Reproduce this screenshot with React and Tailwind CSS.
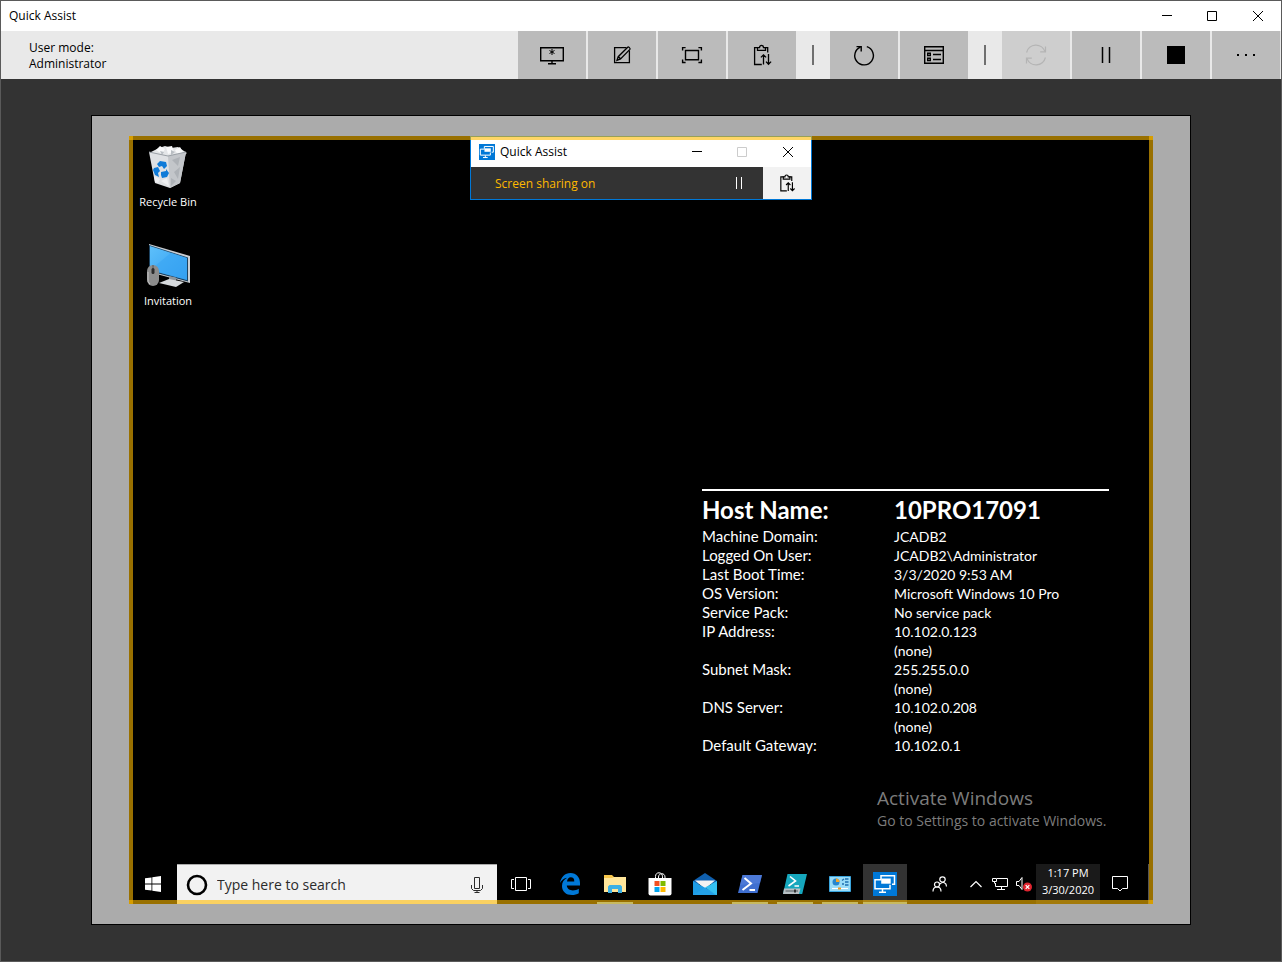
import React from 'react';

const hostInfo = [
  ['Machine Domain:', ['JCADB2']],
  ['Logged On User:', ['JCADB2\\Administrator']],
  ['Last Boot Time:', ['3/3/2020 9:53 AM']],
  ['OS Version:', ['Microsoft Windows 10 Pro']],
  ['Service Pack:', ['No service pack']],
  ['IP Address:', ['10.102.0.123', '(none)']],
  ['Subnet Mask:', ['255.255.0.0', '(none)']],
  ['DNS Server:', ['10.102.0.208', '(none)']],
  ['Default Gateway:', ['10.102.0.1']],
];

// Shared svg wrapper for line icons
function Line({ w = 24, h = 24, sw = 1, color = 'currentColor', children }) {
  return (
    <svg width={w} height={h} viewBox={`0 0 ${w} ${h}`} fill="none" stroke={color} strokeWidth={sw} aria-hidden="true">
      {children}
    </svg>
  );
}

const MonitorIcon = () => (
  <Line sw={1.4}>
    <path d="M.7 4.7h22.6v13H.7zM12 18v3M8 20.7h8" />
    <path strokeWidth="1" d="M12 6v6M9.5 7.5l5 3M14.500 7.500l-5 3" />
  </Line>
);

const EditIcon = () => (
  <Line sw={1.3}>
    <path d="M16.500 4.600H4.600v15h14.800V7.500" />
    <path d="M7 17.300l1.200-3.600L17.700 4.200c.8-.8 3 1.200 2.200 2.200l-9.400 9.500zM8.500 13.800l2 2" />
  </Line>
);

const FitIcon = () => (
  <Line sw={1.4}>
    <path d="M5.500 7.500h13v9.300h-13z" />
    <path d="M2.600 7.500V4.600h3M18.400 4.600h3v2.900M21.400 16.500v3h-3M5.600 19.500h-3v-3" />
  </Line>
);

const ClipboardIcon = () => (
  <Line sw={1.3}>
    <path d="M8 4.600H4.600v16.900h7.200M14.500 4.600h3.200v5" />
    <path d="M7.500 7.400V4.600h2c0-3 4-3 4 0h2v2.800z" />
    <path d="M13.500 21.500V12M10.900 14.400l2.600-2.600 2.600 2.600M18.500 11v10M16 18.600l2.500 2.600 2.600-2.600" />
  </Line>
);

const RestartIcon = () => (
  <Line sw={1.4}>
    <path d="M14.800 3.700a9.300 9.300 0 1 1-6.300.3" />
    <path d="M4.500 3.600h4.700v4.800" />
  </Line>
);

const TaskManagerIcon = () => (
  <Line sw={1.4}>
    <path d="M2.700 3.700h18.600v16.600H2.700zM2.700 7.500h18.600" />
    <path d="M5.700 10.200h2.600v2.300H5.700zM5.700 15.200h2.600v2.300H5.700zM11 11.500h8M11 16.500h8" />
  </Line>
);

const ReconnectIcon = () => (
  <Line sw={1.2} color="#b4b4b4">
    <path d="M2.600 9.500A9.600 9.600 0 0 1 21 8.500M21.400 14.500A9.600 9.600 0 0 1 3 15.500" />
    <path d="M21.500 3.500v5.300h-5.300M2.500 20.500v-5.300h5.300" />
  </Line>
);

const PauseIcon = () => (
  <Line sw={1.5}>
    <path d="M8.500 4v16M15.500 4v16" />
  </Line>
);

const StopIcon = () => (
  <Line>
    <path d="M3 3h18v18H3z" fill="#000" stroke="none" />
  </Line>
);

const MoreIcon = () => (
  <Line>
    <path d="M3 11h2v2H3zM11 11h2v2h-2zM19 11h2v2h-2z" fill="#000" stroke="none" />
  </Line>
);

// Two overlapping screens used as the app logo
function AssistLogo({ size }) {
  return (
    <svg width={size} height={size} viewBox="0 0 24 24" fill="none" aria-hidden="true">
      <path fill="#0078d7" d="M0 0h24v24H0z" />
      <path d="M8 7V3.700h13.500v8.600H19" stroke="#fff" strokeWidth="1.500" />
      <path d="M8.500 7.700H2v9h15v-4" stroke="#fff" strokeWidth="1.500" />
      <path d="M8.200 6.500h9.500v5.200H8.200z" fill="#fff" />
      <path d="M9.500 17v3.300M6 20.300h7" stroke="#fff" strokeWidth="1.500" />
    </svg>
  );
}

function WindowControls({ maxDisabled }) {
  return (
    <div className="flex self-stretch">
      <button aria-label="Minimize" className="flex w-[46px] items-center justify-center">
        <Line w={12} h={10}><path d="M2 4.500h10" /></Line>
      </button>
      <button aria-label="Maximize" disabled={maxDisabled} className="flex w-[46px] items-center justify-center disabled:text-[#cccccc]">
        <Line w={10} h={10}><path d="M.5.5h9v9h-9z" /></Line>
      </button>
      <button aria-label="Close" className="flex w-[46px] items-center justify-center">
        <Line w={10} h={10}><path d="M0 0l10 10M10 0L0 10" /></Line>
      </button>
    </div>
  );
}

function ToolButton({ label, disabled, children }) {
  return (
    <button
      aria-label={label}
      disabled={disabled}
      className="flex w-[68px] items-center justify-center bg-[#bbbbbb] text-black disabled:bg-[#cecece]"
    >
      {children}
    </button>
  );
}

function Separator() {
  return (
    <div className="flex w-[34px] items-center justify-center">
      <div className="h-5 w-[2px] bg-[#6f6f6f]" />
    </div>
  );
}

function Toolbar() {
  return (
    <div className="flex h-12 shrink-0 justify-between bg-[#e9e9e9] pr-px">
      <div className="flex flex-col justify-center pt-[2px] pl-7 text-[12px] leading-4">
        <span>User mode:</span>
        <span>Administrator</span>
      </div>
      <div className="flex">
        <div className="flex gap-[2px]">
          <ToolButton label="Select monitor"><MonitorIcon /></ToolButton>
          <ToolButton label="Annotate"><EditIcon /></ToolButton>
          <ToolButton label="Actual size"><FitIcon /></ToolButton>
          <ToolButton label="Toggle instruction channel"><ClipboardIcon /></ToolButton>
        </div>
        <Separator />
        <div className="flex gap-[2px]">
          <ToolButton label="Restart"><RestartIcon /></ToolButton>
          <ToolButton label="Task Manager"><TaskManagerIcon /></ToolButton>
        </div>
        <Separator />
        <div className="flex gap-[2px]">
          <ToolButton label="Reconnect" disabled><ReconnectIcon /></ToolButton>
          <ToolButton label="Pause"><PauseIcon /></ToolButton>
          <ToolButton label="End"><StopIcon /></ToolButton>
          <ToolButton label="Details"><MoreIcon /></ToolButton>
        </div>
      </div>
    </div>
  );
}

function RecycleBin() {
  return (
    <svg width="48" height="48" viewBox="0 0 48 48" aria-hidden="true">
      <path d="M7 10l8-4 6-2 6 2 7-1 9 6-5 4-26 1z" fill="#e4e6e8" />
      <path d="M12 8l4-4 5 3-3 5zM22 5l6-1 2 6-6 2zM31 8l5-3 3 5-5 3z" fill="#f8f9fa" />
      <path d="M16 9l4 1-2 3zM27 8l4 2-4 3z" fill="#b9bec3" />
      <path d="M5 10l19 4 18-4-6 31-10 5-15-5z" fill="#dfe1e4" />
      <path d="M24 14l18-4-6 31-10 5z" fill="#c3c6ca" />
      <path d="M5 10l19 4 18-4" fill="none" stroke="#9aa0a6" />
      <path d="M28 18l8-3-2 9zM30 30l6-5-2 12zM27 36l5 3-5 5z" fill="#aeb2b7" />
      <path d="M10 34l6 3-2 4-3-1zM17 39l6-3 2 8z" fill="#eff0f2" />
      <path d="M13 22l3-3 6 1 1 4-3 3-2-3-3 1zM10 26l4-1 2 4-2 2 1 4-4-2-2-5zM17 30l5-1v-2l3 4-2 4-5 1-1-3z" fill="#0f7bd8" />
    </svg>
  );
}

function InvitationIcon() {
  return (
    <svg width="48" height="48" viewBox="0 0 48 48" aria-hidden="true">
      <defs>
        <linearGradient id="screen" x1="0" y1="0" x2="1" y2="1">
          <stop offset="0" stopColor="#5ec0fb" />
          <stop offset="1" stopColor="#2f9bee" />
        </linearGradient>
      </defs>
      <path d="M5 3l41 12v27L5 31z" fill="#c9ced3" />
      <path d="M5 4l39 12.500v24L5 30z" fill="#1c4260" />
      <path d="M6 5l37 12v22L6 29z" fill="url(#screen)" />
      <path d="M6 29l21-17.200 16 5.200v22z" fill="#39a5f3" opacity=".6" />
      <path d="M25 35l7 1.500v4l-7-1z" fill="#8e959b" />
      <path d="M15 42l10-4 15 3-8 5z" fill="#d6dadd" />
      <rect x="3" y="24" width="12" height="21" rx="6" fill="#8d8d8d" />
      <path d="M9 24v9" stroke="#555" />
      <rect x="7.500" y="27" width="3" height="6" rx="1.500" fill="#2b2b2b" />
      <path d="M4 31v7a5 5 0 0 0 2 5" stroke="#c8c8c8" fill="none" />
    </svg>
  );
}

function DesktopIcon({ label, children }) {
  return (
    <button className="flex w-[76px] flex-col items-center gap-1 text-[11px] leading-4 text-white">
      {children}
      {label}
    </button>
  );
}

function AssistDialog() {
  return (
    <div className="absolute top-0 left-1/2 w-[342px] -translate-x-1/2 border border-[#0078d7]">
      <div className="flex h-[30px] items-center bg-white pl-2 text-[12px] text-black">
        <AssistLogo size={16} />
        <span className="ml-[5px] flex-1">Quick Assist</span>
        <WindowControls maxDisabled />
      </div>
      <div className="flex h-8 items-center bg-[#333333] pl-6 text-[12px]">
        <span className="flex-1 pt-[2px] text-[#ffb900]">Screen sharing on</span>
        <button aria-label="Pause sharing" className="flex h-8 w-12 items-center justify-center text-white">
          <Line w={8} h={12} sw={1}><path d="M1.500 0v12M6.500 0v12" /></Line>
        </button>
        <button aria-label="Instruction channel" className="flex h-8 w-12 items-center justify-center bg-[#f2f2f2] text-black">
          <svg width="20" height="20" viewBox="0 0 24 24" fill="none" stroke="currentColor" strokeWidth="1.400" aria-hidden="true">
            <path d="M8 4.600H4.600v16.900h7.200M14.500 4.600h3.200v5" />
            <path d="M7.500 7.400V4.600h2c0-3 4-3 4 0h2v2.800z" />
            <path d="M13.500 21.500V12M10.900 14.400l2.600-2.600 2.600 2.600M18.500 11v10M16 18.600l2.500 2.600 2.600-2.600" />
          </svg>
        </button>
      </div>
    </div>
  );
}

function HostInfo() {
  return (
    <table className="mr-1 w-[407px] border-t-2 border-white text-left font-['Lato',sans-serif] text-[15px] leading-[19px] text-white">
      <thead>
        <tr className="text-[24px] leading-[34px] font-bold">
          <th className="w-48 pt-[2px]">Host Name:</th>
          <th className="pt-[2px]">10PRO17091</th>
        </tr>
      </thead>
      <tbody>
        {hostInfo.map(([name, values]) => (
          <tr key={name} className="align-top">
            <td>{name}</td>
            <td className="text-[14px] leading-[19px]">
              {values.map((v) => <div key={v}>{v}</div>)}
            </td>
          </tr>
        ))}
      </tbody>
    </table>
  );
}

function TaskButton({ label, running, active, children }) {
  return (
    <button
      aria-label={label}
      className={`relative flex w-11 items-center justify-center ${active ? 'bg-[#333333]' : ''}`}
    >
      {children}
      {running && <span className="absolute inset-x-1 bottom-0 h-[2px] bg-[#76b9ed]" />}
      {active && <span className="absolute inset-x-0 bottom-0 h-[2px] bg-[#76b9ed]" />}
    </button>
  );
}

const EdgeIcon = () => (
  <svg width="22" height="22" viewBox="0 0 22 22" aria-hidden="true">
    <path fill="#0078d7" d="M1 10C2 4 6 0 11.500 0 17.500 0 21 4.500 21 10v2.600H7.800c.2 3.200 3 4.900 6 4.900 2.300 0 4.400-.7 6-1.700v4.400C18 21.400 15.500 22 13 22c-6 0-10-3.400-10-9 0-3.700 2-6.700 5.200-8.200C5 5.200 2.500 7.200 1 10zm7-1.600h7.300c0-2.600-1.200-4.100-3.500-4.100C9.700 4.300 8.300 6 8 8.400z" />
  </svg>
);

const ExplorerIcon = () => (
  <svg width="22" height="18" viewBox="0 0 22 18" aria-hidden="true">
    <path fill="#f7c64a" d="M0 0h8l2 2h12v15H0z" />
    <path fill="#ffe69a" d="M0 3h8l2-1h12v15H0z" />
    <path fill="#3bb0e5" d="M4 18v-6.500L5.500 10h11l1.500 1.500V18h-4v-4H8v4z" />
  </svg>
);

const StoreIcon = () => (
  <svg width="24" height="24" viewBox="0 0 24 24" aria-hidden="true">
    <path d="M7.500 7V4.500C7.500 2 9 .8 11 .8s3.500 1.500 3.500 4V7M10.500 7V5c0-2 1.500-3.300 3.300-3.300S17 3 17 5v2" stroke="#fff" fill="none" />
    <path fill="#fff" d="M.5 6h23v15.500a2 2 0 0 1-2 2h-19a2 2 0 0 1-2-2z" />
    <path fill="#f25022" d="M6.500 9h5v5h-5z" />
    <path fill="#7fba00" d="M12.500 9h5v5h-5z" />
    <path fill="#00a4ef" d="M6.500 15h5v5h-5z" />
    <path fill="#ffb900" d="M12.500 15h5v5h-5z" />
  </svg>
);

const MailIcon = () => (
  <svg width="24" height="22" viewBox="0 0 24 22" aria-hidden="true">
    <path fill="#0f5fae" d="M0 8l12-8 12 8v3H0z" />
    <path fill="#f3f3f3" d="M2 7.500h20L12 16z" />
    <path fill="#1e9de6" d="M0 8l24 13.500-1 .5H0z" />
    <path fill="#35c0f0" d="M24 8v14h-1.500L12 14.500z" />
    <path fill="#2aa5ea" d="M0 22l12-7.500L24 22z" opacity=".5" />
  </svg>
);

const PowerShellIcon = () => (
  <svg width="24" height="18" viewBox="0 0 24 18" aria-hidden="true">
    <path fill="#3f6fd0" d="M4.500 0H24l-4.500 18H0z" />
    <path fill="#5581dc" d="M4.500 0H24l-2 8L2 10z" opacity=".6" />
    <path d="M6.500 3l6.500 5.500L4.500 15M11.500 15H17" stroke="#fff" strokeWidth="2" fill="none" />
  </svg>
);

const PowerShellIseIcon = () => (
  <svg width="24" height="20" viewBox="0 0 24 20" aria-hidden="true">
    <path fill="#16a7bd" d="M4.500 0H24l-4.800 20H0z" />
    <path fill="#b9c0c4" d="M1 14.500h16.500L16 20H0z" />
    <path d="M7 2.500l5.500 4.500L5.500 12M11.500 12H16" stroke="#fff" strokeWidth="1.600" fill="none" />
    <path d="M2.500 17h12.500" stroke="#535a5e" />
    <path d="M11 15.500h2v3h-2z" fill="#333" />
  </svg>
);

const ControlPanelIcon = () => (
  <svg width="22" height="16" viewBox="0 0 22 16" aria-hidden="true">
    <path fill="#9adcf8" stroke="#3aa5dd" d="M.5.5h21v15H.5z" />
    <circle cx="7" cy="6" r="3.500" fill="#2787cf" />
    <path d="M7 6V2.500A3.500 3.500 0 0 1 10.500 6z" fill="#f4a62a" />
    <path d="M13 4.500l2-1.500M13 8h2M16 3h3.500M16 6h3.500M16 9h3.500" stroke="#1f6fae" strokeWidth="1.300" />
    <path d="M3 12.500h6M12 12.500h7" stroke="#fff" />
    <path d="M9 12.500h3" stroke="#f09a1e" strokeWidth="2" />
  </svg>
);

function Taskbar() {
  return (
    <div className="flex h-10 shrink-0 bg-black text-white">
      <button aria-label="Start" className="flex w-12 items-center justify-center">
        <svg width="16" height="16" viewBox="0 0 16 16" fill="#fff" aria-hidden="true">
          <path d="M0 2.300L6.500 1.400v6.200H0zM7.300 1.300L16 0v7.600H7.300zM0 8.400h6.500v6.200L0 13.700zM7.300 8.400H16V16l-8.700-1.300z" />
        </svg>
      </button>
      <label className="flex w-80 items-center border-t border-[#aaaaaa] bg-[#f2f2f2] pr-[14px] pl-[9px] text-[#2b2b2b]">
        <svg width="22" height="22" viewBox="0 0 22 22" aria-hidden="true">
          <circle cx="11" cy="11" r="9" fill="none" stroke="#000" strokeWidth="2.600" />
        </svg>
        <input
          type="text"
          aria-label="Search"
          placeholder="Type here to search"
          className="ml-[9px] min-w-0 flex-1 bg-transparent text-[14px] outline-none placeholder:text-[#2b2b2b]"
        />
        <Line w={12} h={16}>
          <path d="M3.500.5h5v11h-5zM.5 8v3.500l2 2h7l2-2V8M6 13.500V16M3.500 15.500h5" />
        </Line>
      </label>
      <button aria-label="Task View" className="flex w-12 items-center justify-center">
        <Line w={20} h={14}><path d="M4.500.5h11v13h-11zM3 2.500H.5v9H3M17 2.500h2.500v9H17" /></Line>
      </button>
      <div className="ml-[3px] flex gap-px">
        <TaskButton label="Microsoft Edge"><EdgeIcon /></TaskButton>
        <TaskButton label="File Explorer" running><ExplorerIcon /></TaskButton>
        <TaskButton label="Microsoft Store"><StoreIcon /></TaskButton>
        <TaskButton label="Mail"><MailIcon /></TaskButton>
        <TaskButton label="Windows PowerShell" running><PowerShellIcon /></TaskButton>
        <TaskButton label="PowerShell ISE" running><PowerShellIseIcon /></TaskButton>
        <TaskButton label="Control Panel" running><ControlPanelIcon /></TaskButton>
        <TaskButton label="Quick Assist" active><AssistLogo size={24} /></TaskButton>
      </div>
      <div className="ml-auto flex">
        <button aria-label="People" className="mr-1 flex w-10 items-center justify-center">
          <Line w={16} h={16} sw={1.2}>
            <circle cx="10.500" cy="3.500" r="2.700" />
            <circle cx="5" cy="8.500" r="2.500" />
            <path d="M1 15.500c0-6 8-6 8 0M8 8c3-3 6.500-1 6.500 2.500" />
          </Line>
        </button>
        <button aria-label="Show hidden icons" className="flex w-6 items-center justify-center">
          <Line w={12} h={8} sw={1.2}><path d="M.5 7L6 1.500 11.500 7" /></Line>
        </button>
        <button aria-label="Network" className="flex w-6 items-center justify-center">
          <Line w={16} h={14}>
            <path d="M5 1.500h10.500v8H3.500V6M.5 1.500h4v3h-4zM2.500 4.500v2M9.500 10v3M5 12.500h8" />
          </Line>
        </button>
        <button aria-label="Volume muted" className="flex w-6 items-center justify-center">
          <svg width="16" height="16" viewBox="0 0 16 16" fill="none" aria-hidden="true">
            <path d="M.5 5.500H3l3-4v12l-3-4H.5z" stroke="#fff" />
            <circle cx="11.500" cy="11" r="4.500" fill="#e0242f" />
            <path d="M9.700 9.200l3.600 3.600M13.300 9.200l-3.600 3.600" stroke="#fff" strokeWidth="1.200" />
          </svg>
        </button>
        <button className="flex w-16 flex-col items-center bg-[#1a1a1a] text-[11px] leading-[17px]">
          <span>1:17 PM</span>
          <span>3/30/2020</span>
        </button>
        <button aria-label="Action center" className="mr-2 flex w-10 items-center justify-center">
          <Line w={16} h={16}><path d="M.5.5h15v12h-5L8 15l-2.500-2.500h-5z" /></Line>
        </button>
        <button aria-label="Show desktop" className="w-[5px] border-l border-[#555555]" />
      </div>
    </div>
  );
}

// Translucent frame drawn over the shared screen
function ShareFrame() {
  return (
    <div className="pointer-events-none">
      <div className="absolute inset-x-0 top-0 h-1 bg-[#ffba00]/60" />
      <div className="absolute inset-x-0 bottom-0 h-1 bg-[#ffba00]/60" />
      <div className="absolute inset-y-0 left-0 w-1 bg-[#ffba00]/60" />
      <div className="absolute inset-y-0 right-0 w-1 bg-[#ffba00]/60" />
    </div>
  );
}

function RemoteDesktop() {
  return (
    <div className="relative flex flex-1 flex-col bg-black">
      <div className="flex flex-1 justify-between">
        <div className="flex flex-col gap-[31px] pt-[6px] pl-px">
          <DesktopIcon label="Recycle Bin"><RecycleBin /></DesktopIcon>
          <DesktopIcon label="Invitation"><InvitationIcon /></DesktopIcon>
        </div>
        <div className="flex flex-col justify-end pr-10 pb-8">
          <HostInfo />
          <div className="mt-[31px] w-[236px] self-end text-[#7c7c7c]">
            <p className="text-[19px] leading-6">Activate Windows</p>
            <p className="text-[14px] leading-[22px]">Go to Settings to activate Windows.</p>
          </div>
        </div>
      </div>
      <Taskbar />
      <AssistDialog />
      <ShareFrame />
    </div>
  );
}

export default function App() {
  return (
    <div className="flex min-h-screen flex-col border border-[#5a5a5a] bg-[#333333] font-['Open_Sans','Noto_Sans',sans-serif] text-black">
      <header className="flex h-[30px] shrink-0 items-center justify-between bg-white pl-2 text-[12px]">
        <h1>Quick Assist</h1>
        <WindowControls />
      </header>
      <Toolbar />
      <main className="flex flex-1 flex-col px-[90px] py-9">
        <div className="flex flex-1 flex-col border border-black bg-[#ababab] px-[37px] py-5">
          <RemoteDesktop />
        </div>
      </main>
    </div>
  );
}
